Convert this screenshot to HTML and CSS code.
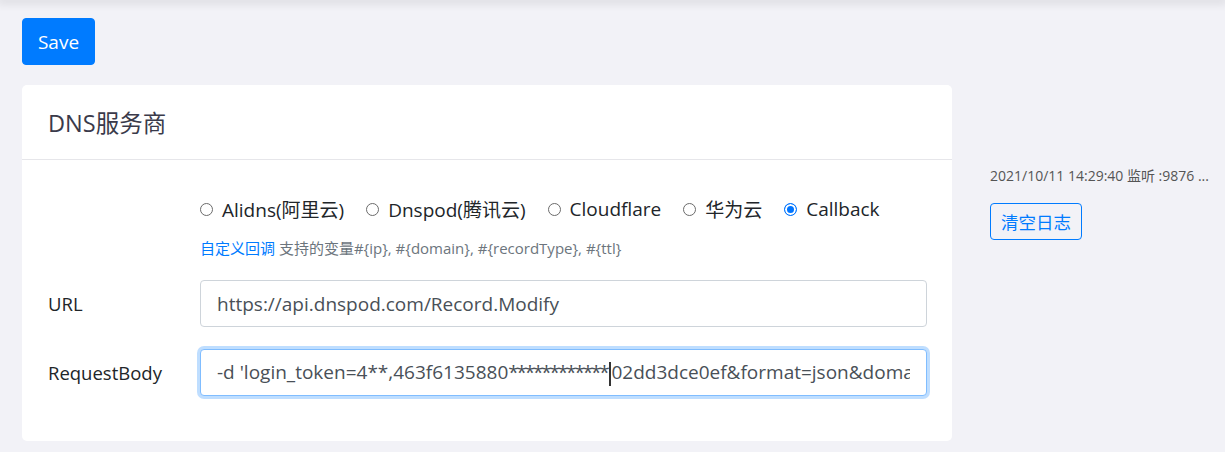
FILE: index.html
```html
<!DOCTYPE html>
<html lang="zh-CN">
<head>
    <meta charset="UTF-8">
    <meta name="viewport" content="width=device-width, initial-scale=1.0">
    <title>DDNS</title>
    <link rel="stylesheet" href="styles.css">
</head>
<body>
    <div class="topbar"></div>
    <div class="page">
        <button class="btn btn-primary save-btn">Save</button>
        <div class="layout">
            <div class="card">
                <div class="card-header">
                    <h2>DNS服务商</h2>
                </div>
                <div class="card-body">
                    <div class="form-row">
                        <div class="form-label"></div>
                        <div class="form-field">
                            <div class="radios">
                                <label class="radio"><span class="dot"></span>Alidns(阿里云)</label>
                                <label class="radio"><span class="dot"></span>Dnspod(腾讯云)</label>
                                <label class="radio"><span class="dot"></span>Cloudflare</label>
                                <label class="radio"><span class="dot"></span>华为云</label>
                                <label class="radio"><span class="dot checked"></span>Callback</label>
                            </div>
                            <div class="help"><a href="#">自定义回调</a> 支持的变量#{ip}, #{domain}, #{recordType}, #{ttl}</div>
                        </div>
                    </div>
                    <div class="form-row">
                        <div class="form-label">URL</div>
                        <div class="form-field">
                            <input class="input" type="text" value="https://api.dnspod.com/Record.Modify">
                        </div>
                    </div>
                    <div class="form-row">
                        <div class="form-label">RequestBody</div>
                        <div class="form-field">
                            <div class="input focused"><div class="input-text">-d 'login_token=4**,463f6135880<span class="masked">************</span><span class="caret"></span>02dd3dce0ef&amp;format=json&amp;doma</div></div>
                        </div>
                    </div>
                </div>
            </div>
            <div class="side">
                <div class="log">2021/10/11 14:29:40 监听 :9876 ...</div>
                <button class="btn btn-outline">清空日志</button>
            </div>
        </div>
    </div>
</body>
</html>
```

FILE: styles.css
```css
body {
    margin: 0;
    font-family: "Open Sans", "Noto Sans CJK SC", sans-serif;
    background-color: #f2f2f7;
    color: #212529;
    overflow: hidden;
}
.topbar {
    height: 0;
    box-shadow: 0 0 10px 3px rgba(0, 0, 0, 0.12);
}
.page {
    padding: 18px 22px;
}
.btn {
    font-family: inherit;
    cursor: pointer;
    border-radius: 4px;
}
.btn-primary {
    background-color: #007bff;
    color: #fff;
    border: 1px solid #007bff;
}
.save-btn {
    width: 73px;
    height: 47px;
    font-size: 19px;
    padding: 0;
}
.btn-outline {
    background: transparent;
    color: #007bff;
    border: 1px solid #007bff;
    font-size: 17.5px;
    width: 92px;
    height: 37px;
    padding: 0;
}
.layout {
    display: flex;
    margin-top: 20px;
    gap: 38px;
}
.card {
    width: 930px;
    background-color: #fff;
    border-radius: 5px;
}
.card-header {
    height: 74px;
    border-bottom: 1px solid #e6e6ea;
    display: flex;
    align-items: center;
    padding: 0 26px;
}
.card-header h2 {
    margin: 0;
    font-size: 23.5px;
    font-weight: 400;
    color: #3a3a4a;
}
.card-body {
    padding: 35px 25px 45px 26px;
}
.form-row {
    display: flex;
    align-items: center;
    margin-bottom: 22px;
}
.form-row:last-child {
    margin-bottom: 0;
}
.form-label {
    width: 152px;
    flex-shrink: 0;
    font-size: 18.5px;
}
.form-field {
    flex-grow: 1;
    min-width: 0;
}
.radios {
    display: flex;
    gap: 22px;
    font-size: 19px;
    color: #212529;
}
.radio {
    display: flex;
    align-items: center;
}
.dot {
    width: 11px;
    height: 11px;
    border: 1px solid #6b6b6b;
    border-radius: 50%;
    margin-right: 9px;
    box-sizing: content-box;
}
.dot.checked {
    border-color: #0075ff;
    background-color: #0075ff;
    box-shadow: inset 0 0 0 2px #fff;
}
.help {
    margin-top: 14px;
    font-size: 15px;
    color: #6c757d;
}
.help a {
    color: #007bff;
    text-decoration: none;
}
.input {
    box-sizing: border-box;
    width: 100%;
    height: 47px;
    border: 1px solid #ced4da;
    border-radius: 4px;
    padding: 0 16px;
    font-family: inherit;
    font-size: 19px;
    color: #495057;
    background-color: #fff;
    outline: none;
}
.input.focused {
    display: flex;
    align-items: center;
    border-color: #80bdff;
    box-shadow: 0 0 0 3px rgba(0, 123, 255, 0.25);
}
.input-text {
    white-space: nowrap;
    overflow: hidden;
    min-width: 0;
}
.masked {
    letter-spacing: -2.2px;
}
.caret {
    display: inline-block;
    vertical-align: middle;
    width: 2px;
    height: 24px;
    background-color: #333;
    margin: 0 0 0 2px;
}
.side {
    padding-top: 80px;
    width: 235px;
}
.log {
    font-size: 14px;
    color: #555;
    white-space: nowrap;
    margin-bottom: 18px;
}
```
